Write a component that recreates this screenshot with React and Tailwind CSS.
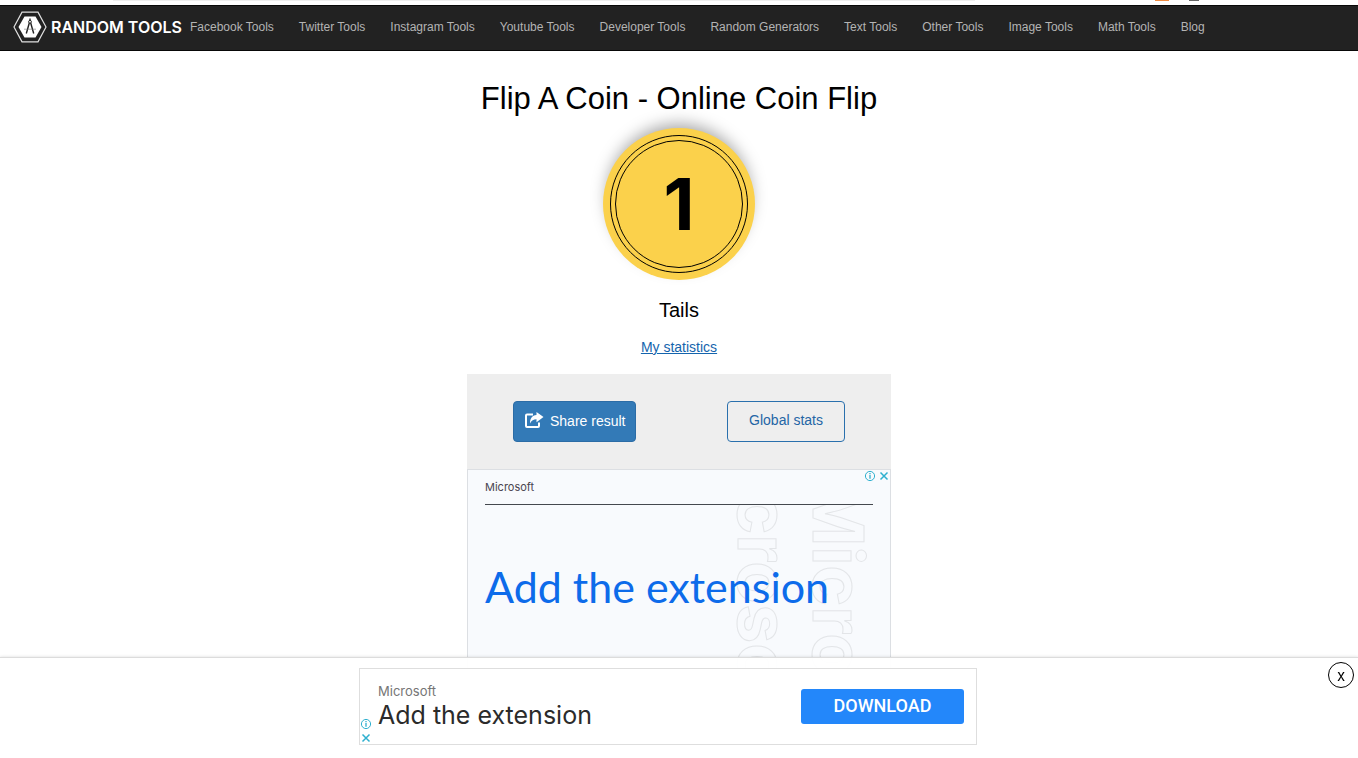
import React, { useState } from "react";

const NAV_LINKS = [
  "Facebook Tools",
  "Twitter Tools",
  "Instagram Tools",
  "Youtube Tools",
  "Developer Tools",
  "Random Generators",
  "Text Tools",
  "Other Tools",
  "Image Tools",
  "Math Tools",
  "Blog",
];

function Logo() {
  return (
    <svg viewBox="0 0 34 32" className="h-8 w-[34px] shrink-0" fill="none" aria-hidden="true">
      <path d="M9 1.2h16L33 16l-8 14.8H9L1 16z" stroke="#e0e0e0" strokeWidth="1.2" />
      <path d="M11.500 5.500h11L28.500 16l-6 10.500h-11L5.500 16z" fill="#fff" />
      <circle cx="17" cy="10.800" r="1.400" stroke="#222" strokeWidth="1" />
      <path d="M17 7.500v2M16.300 12l-3 10.500M17.700 12l3 10.500" stroke="#222" strokeWidth="1.400" />
      <path d="M11 18.200h12" stroke="#777" strokeWidth="0.600" />
    </svg>
  );
}

function ShareIcon() {
  return (
    <svg viewBox="0 0 20 17" className="h-[17px] w-5 shrink-0" fill="none" aria-hidden="true">
      <path d="M9 2.500H3A1 1 0 0 0 2 3.500V14a1 1 0 0 0 1 1h11a1 1 0 0 0 1-1v-3.500" stroke="#fff" strokeWidth="2" />
      <path d="M12.500 0 19.500 5l-7 5.200V7.300C9.500 7.300 7.500 8.500 6 11.500 6 6.500 8 3.300 12.500 3z" fill="#fff" />
    </svg>
  );
}

function AdChoices({ className }) {
  return (
    <div className={className}>
      <a href="#adchoices" aria-label="Ad choices">
        <svg viewBox="0 0 12 12" className="h-3 w-3" fill="none" stroke="#2fb0cf">
          <circle cx="6" cy="6" r="4.600" />
          <path d="M6 5v3.800M6 3v1.200" strokeWidth="1.300" />
        </svg>
      </a>
      <button type="button" aria-label="Close ad">
        <svg viewBox="0 0 12 12" className="h-3 w-3" fill="none" stroke="#2fb0cf" strokeWidth="1.500">
          <path d="m2.500 2.500 7 7M9.500 2.500l-7 7" />
        </svg>
      </button>
    </div>
  );
}

function Navbar() {
  return (
    <header className="flex h-[46px] items-center border-y border-[#080808] bg-[#222] pl-[13px]">
      <a href="#home" className="flex items-center gap-1 pb-0.5 font-['Inter'] text-base font-semibold whitespace-nowrap text-white">
        <Logo />
        RANDOM TOOLS
      </a>
      <nav className="ml-2 flex gap-[25px] pb-0.5 text-xs whitespace-nowrap text-[#b4b4b4]">
        {NAV_LINKS.map((label) => (
          <a key={label} href="#tools" className="hover:text-white">
            {label}
          </a>
        ))}
      </nav>
    </header>
  );
}

function Coin({ value }) {
  return (
    <button
      type="button"
      aria-label="Flip the coin"
      className="flex size-[152px] items-center justify-center rounded-full bg-[#fbd14b] shadow-[0_-8px_16px_-4px_rgba(0,0,0,0.35)]"
    >
      <span className="flex size-[138px] items-center justify-center rounded-full border border-black">
        <span className="flex size-32 items-center justify-center rounded-full border border-black font-['Inter'] text-7xl font-bold">
          {value}
        </span>
      </span>
    </button>
  );
}

function ExtensionAd() {
  return (
    <section className="relative h-[200px] overflow-hidden border border-[#dcdfe3] bg-[#f8fafd] px-[17px]">
      <AdChoices className="absolute top-0 right-0 flex gap-0.5" />
      <p className="border-b border-[#44484e] pt-[9px] pb-[9px] font-['Inter'] text-[11px] leading-4 text-[#4a4550]">Microsoft</p>
      {/* outlined brand name running down the right side */}
      <div
        aria-hidden="true"
        className="absolute inset-x-0 top-[35px] bottom-0 overflow-hidden font-['Inter'] text-[70px] font-bold text-[#f8fafd] select-none [-webkit-text-stroke:1px_#e3e5e8]"
      >
        <span className="absolute -top-6 right-3.5 leading-[75px] [writing-mode:vertical-rl]">Microsoft</span>
        <span className="absolute -top-24 right-[89px] leading-[75px] [writing-mode:vertical-rl]">Microsoft</span>
      </div>
      <p className="relative pt-14 font-['Lato'] text-[43px] leading-[52px] whitespace-nowrap text-[#0d6bea]">
        Add the extension
      </p>
    </section>
  );
}

function StickyBanner({ onClose }) {
  return (
    <aside className="fixed inset-x-0 bottom-0 border-t border-[#dcdcdc] bg-white/95 pt-2.5 pr-[22px] pb-[13px] shadow-[0_0_3px_rgba(0,0,0,0.15)]">
      <div className="relative mx-auto flex h-[77px] max-w-[618px] items-center justify-between border border-[#dedede] bg-white pr-3 pl-[18px]">
        <div className="font-['Inter']">
          <p className="text-[13px] leading-4 text-[#757575]">Microsoft</p>
          <p className="text-[25px] leading-8 text-[#2b2b2b]">Add the extension</p>
        </div>
        <button type="button" className="h-[35px] w-[163px] rounded-[3px] bg-[#2387fa] pb-0.5 font-['Roboto'] text-lg font-medium text-white">
          DOWNLOAD
        </button>
        <AdChoices className="absolute bottom-0 left-0 flex flex-col gap-0.5" />
      </div>
      <button
        type="button"
        onClick={onClose}
        aria-label="Close banner"
        className="absolute top-1 right-1 size-[26px] rounded-full border border-black bg-white font-['Inter'] text-[15px] leading-none"
      >
        x
      </button>
    </aside>
  );
}

export default function App() {
  const [bannerOpen, setBannerOpen] = useState(true);

  return (
    <div className="min-h-screen bg-white font-['Liberation_Sans',sans-serif] text-black">
      <div className="flex h-[5px] items-start pr-[159px] pl-[113px]">
        <div className="h-px w-[862px] bg-[#eeeeee]" />
        <div className="ml-auto h-px w-3.5 bg-[#f08c43]" />
        <div className="ml-5 h-px w-2.5 bg-[#666]" />
      </div>
      <Navbar />
      <main className="mx-auto flex max-w-[424px] flex-col pt-7">
        <h1 className="text-center text-[31px] leading-10 whitespace-nowrap">Flip A Coin - Online Coin Flip</h1>
        <div className="mt-[9px] flex flex-col items-center">
          <Coin value={1} />
          <p className="mt-4 text-xl leading-7">Tails</p>
          <a href="#statistics" className="mt-[13px] text-sm leading-5 text-[#1464ad] underline">
            My statistics
          </a>
        </div>
        <div className="mt-[17px] flex h-[95px] items-center justify-between bg-[#eee] px-[46px]">
          <button type="button" className="flex h-[41px] items-center gap-1.5 rounded border border-[#2b6ca6] bg-[#337ab7] px-2.5 pb-0.5 text-sm text-white">
            <ShareIcon />
            Share result
          </button>
          <button type="button" className="h-[41px] rounded border border-[#2a70ad] px-[21px] pb-1 text-sm text-[#2465a5]">
            Global stats
          </button>
        </div>
        <ExtensionAd />
      </main>
      {bannerOpen && <StickyBanner onClose={() => setBannerOpen(false)} />}
    </div>
  );
}
